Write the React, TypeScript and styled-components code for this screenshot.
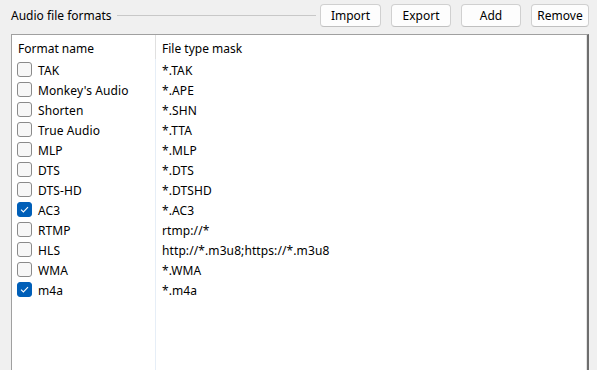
import React from "react";
import styled, { createGlobalStyle } from "styled-components";

const Global = createGlobalStyle`
  html, body { margin: 0; padding: 0; background: #f0f0f0; overflow: hidden; }
  body { font-family: "Noto Sans", "Open Sans", sans-serif; font-size: 12px; color: #000; }
`;

const Page = styled.div`
  width: 597px;
  height: 370px;
  padding: 3px 8px 0 11px;
  box-sizing: border-box;
  display: flex;
  flex-direction: column;
`;

const TopBar = styled.div`
  display: flex;
  align-items: center;
  height: 24px;
`;

const Title = styled.span`
  white-space: nowrap;
  margin-right: 5px;
  padding-top: 1px;
`;

const Rule = styled.div`
  flex: 1;
  height: 1px;
  background: #c8c8c8;
  margin-right: 4px;
`;

const Btn = styled.button<{ $w: number }>`
  width: ${(p) => p.$w}px;
  height: 23px;
  margin-left: 10px;
  background: #fdfdfd;
  border: 1px solid #d0d0d0;
  border-bottom-color: #c0c0c0;
  border-radius: 4px;
  font-family: inherit;
  font-size: 12px;
  color: #000;
  padding: 1px 0 0;
  &:first-of-type { margin-left: 0; }
`;

const List = styled.div`
  margin-top: 7px;
  flex: 1;
  background: #fff;
  border: 1px solid #a0a0a0;
  border-right: 2px solid #6e6e6e;
  border-bottom: none;
  box-shadow: inset -1px 0 0 #e3e3e3;
  position: relative;
  display: grid;
  grid-template-columns: 143px 1fr;
  grid-auto-rows: 20px;
  grid-template-rows: 24px;
  align-content: start;
`;

const ColLine = styled.div`
  position: absolute;
  left: 143px;
  top: 0;
  bottom: 0;
  width: 1px;
  background: #e6eef7;
`;

const HeadLine = styled.div`
  position: absolute;
  left: 143px;
  top: 0;
  height: 24px;
  width: 1px;
  background: #e0e0e0;
`;

const HeadCell = styled.div<{ $pl: number }>`
  display: flex;
  align-items: center;
  padding-left: ${(p) => p.$pl}px;
  padding-top: 2px;
  white-space: nowrap;
`;

const Cell = styled.div<{ $pl: number }>`
  display: flex;
  align-items: center;
  padding-left: ${(p) => p.$pl}px;
  padding-top: 2px;
  white-space: nowrap;
  letter-spacing: 0.1px;
`;

const Box = styled.span<{ $on: boolean }>`
  width: 15px;
  height: 15px;
  box-sizing: border-box;
  border-radius: 3px;
  margin-right: 6px;
  margin-top: -1px;
  flex: none;
  display: flex;
  align-items: center;
  justify-content: center;
  background: ${(p) => (p.$on ? "#005fb8" : "#f7f7f7")};
  border: 1px solid ${(p) => (p.$on ? "#005fb8" : "#8a8a8a")};
`;

const rows: [string, string, boolean][] = [
  ["TAK", "*.TAK", false],
  ["Monkey's Audio", "*.APE", false],
  ["Shorten", "*.SHN", false],
  ["True Audio", "*.TTA", false],
  ["MLP", "*.MLP", false],
  ["DTS", "*.DTS", false],
  ["DTS-HD", "*.DTSHD", false],
  ["AC3", "*.AC3", true],
  ["RTMP", "rtmp://*", false],
  ["HLS", "http://*.m3u8;https://*.m3u8", false],
  ["WMA", "*.WMA", false],
  ["m4a", "*.m4a", true],
];

export default function App() {
  return (
    <>
      <Global />
      <Page>
        <TopBar>
          <Title>Audio file formats</Title>
          <Rule />
          <Btn $w={61}>Import</Btn>
          <Btn $w={60}>Export</Btn>
          <Btn $w={60}>Add</Btn>
          <Btn $w={58}>Remove</Btn>
        </TopBar>
        <List>
          <ColLine />
          <HeadLine />
          <HeadCell $pl={6}>Format name</HeadCell>
          <HeadCell $pl={7}>File type mask</HeadCell>
          {rows.map(([name, mask, on]) => (
            <React.Fragment key={name}>
              <Cell $pl={5}>
                <Box $on={on}>
                  {on && (
                    <svg width="9" height="7" viewBox="0 0 9 7">
                      <path d="M1 3.6 L3.4 6 L8 1.2" fill="none" stroke="#fff" strokeWidth="1.1" />
                    </svg>
                  )}
                </Box>
                {name}
              </Cell>
              <Cell $pl={7}>{mask}</Cell>
            </React.Fragment>
          ))}
        </List>
      </Page>
    </>
  );
}
